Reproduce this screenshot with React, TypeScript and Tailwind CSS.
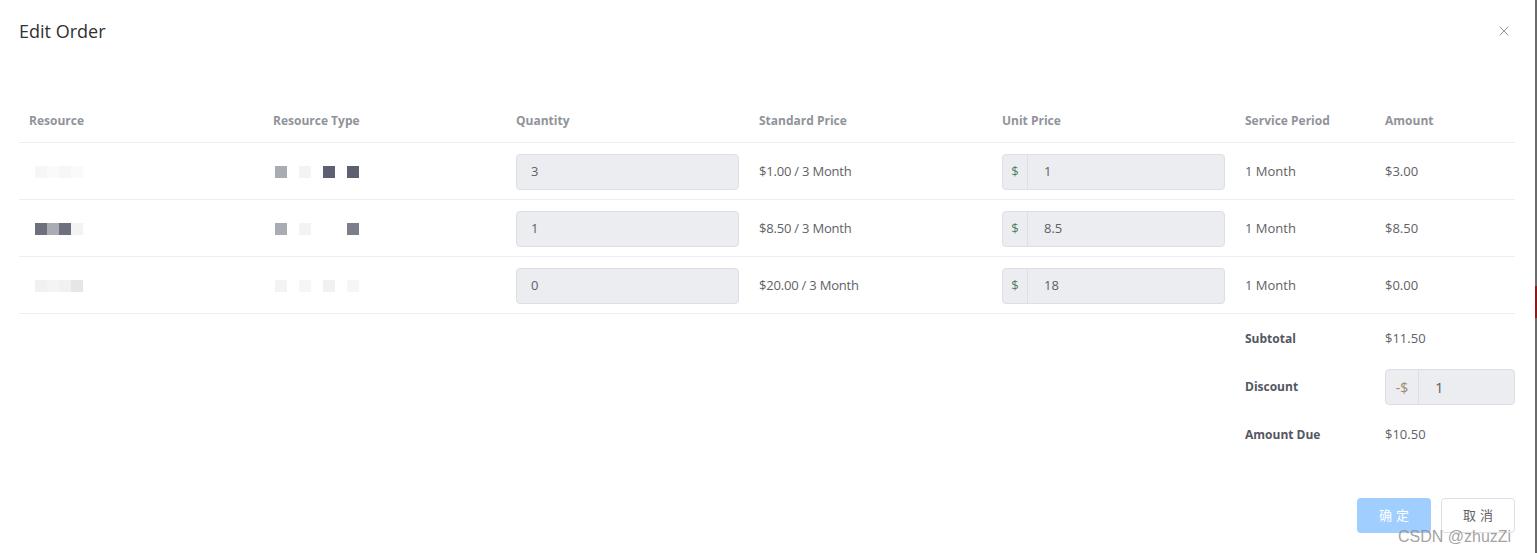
import { X } from "lucide-react";

const font = { fontFamily: '"Open Sans", "Noto Sans", "Noto Sans CJK SC", sans-serif' };

const cols = "grid grid-cols-[243px_243px_243px_243px_243px_140px_141px]";

const headers = ["Resource", "Resource Type", "Quantity", "Standard Price", "Unit Price", "Service Period", "Amount"];

type Row = {
  res: string[];
  type: string[];
  qty: string;
  std: string;
  unit: string;
  amount: string;
};

// blurred placeholder blocks (the names are pixelated in the screenshot)
const rows: Row[] = [
  {
    res: ["bg-[#f6f6f7]", "bg-[#fafafa]", "bg-[#f6f6f7]", "bg-[#fafafa]"],
    type: ["bg-[#a9acb3]", "bg-[#f3f3f4]", "bg-[#5d6070]", "bg-[#5d6070]"],
    qty: "3",
    std: "$1.00 / 3 Month",
    unit: "1",
    amount: "$3.00",
  },
  {
    res: ["bg-[#6e717d]", "bg-[#a9acb3]", "bg-[#6e717d]", "bg-[#f3f3f4]"],
    type: ["bg-[#a9acb3]", "bg-[#f3f3f4]", "bg-white", "bg-[#7c7f89]"],
    qty: "1",
    std: "$8.50 / 3 Month",
    unit: "8.5",
    amount: "$8.50",
  },
  {
    res: ["bg-[#f1f1f2]", "bg-[#f4f4f5]", "bg-[#f1f1f2]", "bg-[#e6e6e8]"],
    type: ["bg-[#f3f3f4]", "bg-[#f6f6f7]", "bg-[#f1f1f2]", "bg-[#f6f6f7]"],
    qty: "0",
    std: "$20.00 / 3 Month",
    unit: "18",
    amount: "$0.00",
  },
];

function Blur({ cells }: { cells: string[] }) {
  return (
    <div className="flex gap-[12px]">
      {cells.map((c, i) => (
        <div key={i} className={`w-[12px] h-[12px] ${c}`} />
      ))}
    </div>
  );
}

function BlurTight({ cells }: { cells: string[] }) {
  return (
    <div className="flex">
      {cells.map((c, i) => (
        <div key={i} className={`w-[12px] h-[12px] ${c}`} />
      ))}
    </div>
  );
}

export default function App() {
  return (
    <div className="relative w-[1537px] h-[553px] overflow-hidden bg-white flex" style={font}>
      <div className="w-[1535px] h-full flex flex-col">
        {/* HEADER */}
        <div className="flex items-center justify-between pl-[19px] pr-[23px] pt-[18px] h-[44px]">
          <span className="text-[18px] leading-6 text-[#303133]">Edit Order</span>
          <X size={16} strokeWidth={1.4} className="text-[#8a8d94]" />
        </div>

        {/* TABLE */}
        <div className="ml-[19px] w-[1496px] mt-[52px]">
          <div className={`${cols} h-[47px] pt-[4px] border-b border-[#ebeef5] items-center`}>
            {headers.map((h) => (
              <div key={h} className="pl-[11px] first:pl-[10px] text-[12px] font-bold text-[#909399]">
                {h}
              </div>
            ))}
          </div>

          {rows.map((r, i) => (
            <div key={i} className={`${cols} h-[57px] pt-[1px] border-b border-[#ebeef5] items-center text-[13px] text-[#606266]`}>
              <div className="pl-[16px]">
                <BlurTight cells={r.res} />
              </div>
              <div className="pl-[13px]">
                <Blur cells={r.type} />
              </div>
              <div className="pl-[11px] pr-[9px]">
                <div className="h-[36px] rounded-[4px] border border-[#dcdfe6] bg-[#ebedf1] flex items-center pl-[14px]">
                  {r.qty}
                </div>
              </div>
              <div className="pl-[11px] tracking-[-0.2px]">{r.std}</div>
              <div className="pl-[11px] pr-[9px]">
                <div className="h-[36px] rounded-[4px] border border-[#dcdfe6] bg-[#ebedf1] flex items-center">
                  <div className="w-[25px] h-full border-r border-[#dcdfe6] flex items-center justify-center text-[#4f7c60]">
                    $
                  </div>
                  <span className="pl-[16px]">{r.unit}</span>
                </div>
              </div>
              <div className="pl-[11px]">1 Month</div>
              <div className="pl-[11px]">{r.amount}</div>
            </div>
          ))}

          {/* SUMMARY */}
          <div className="grid grid-cols-[1215px_140px_141px] text-[13px] pt-[1px]">
            <div />
            <div className="flex flex-col">
              <div className="h-[48px] flex items-center pl-[11px] text-[12px] font-bold text-[#545761]">Subtotal</div>
              <div className="h-[48px] flex items-center pl-[11px] text-[12px] font-bold text-[#545761]">Discount</div>
              <div className="h-[48px] flex items-center pl-[11px] text-[12px] font-bold text-[#545761]">Amount Due</div>
            </div>
            <div className="flex flex-col text-[#606266]">
              <div className="h-[48px] flex items-center pl-[11px]">$11.50</div>
              <div className="h-[48px] flex items-center pl-[11px]">
                <div className="w-full h-[36px] rounded-[4px] border border-[#dcdfe6] bg-[#ebedf1] flex items-center">
                  <div className="w-[33px] h-full border-r border-[#dcdfe6] flex items-center justify-center text-[14px] text-[#a08a6c]">
                    -$
                  </div>
                  <span className="pl-[16px] text-[15px]">1</span>
                </div>
              </div>
              <div className="h-[48px] flex items-center pl-[11px]">$10.50</div>
            </div>
          </div>
        </div>

        {/* FOOTER */}
        <div className="flex justify-end gap-[10px] pr-[20px] mt-[39px]">
          <button className="w-[74px] h-[35px] rounded-[4px] bg-[#a0cfff] text-white text-[13px] tracking-[4px] pl-[4px]">
            确定
          </button>
          <button className="w-[74px] h-[35px] rounded-[4px] border border-[#dcdfe6] bg-white text-[#606266] text-[13px] tracking-[4px] pl-[4px]">
            取消
          </button>
        </div>
      </div>

      {/* page edge behind the dialog */}
      <div className="w-[2px] h-full bg-[#6b6b6b] flex flex-col">
        <div className="h-[286px]" />
        <div className="h-[32px] bg-[#8b1a1a]" />
      </div>

      {/* watermark */}
      <div
        className="absolute left-[1398px] top-[525px] text-[16px] text-[#8a8a8a]/80"
        style={{ fontFamily: '"Liberation Sans", Arial, sans-serif' }}
      >
        CSDN @zhuzZi
      </div>
    </div>
  );
}
